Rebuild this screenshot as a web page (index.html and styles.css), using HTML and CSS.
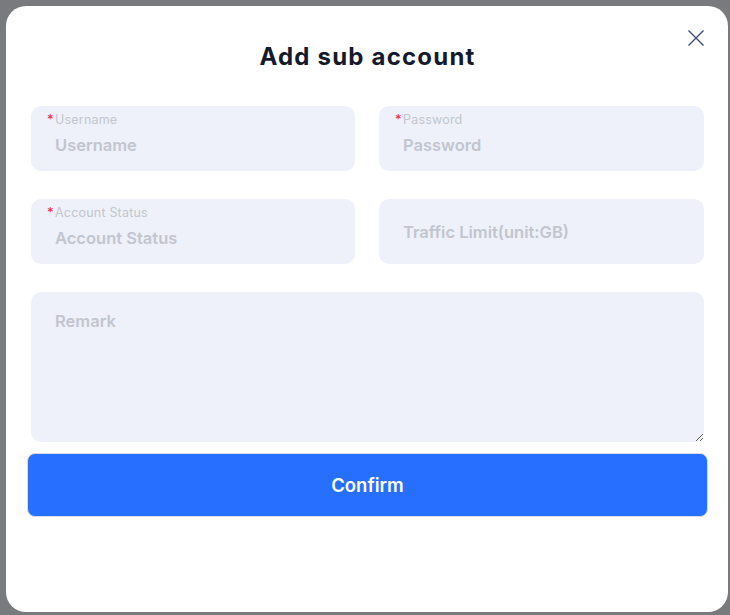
FILE: index.html
```html
<!DOCTYPE html>
<html lang="en">
<head>
<meta charset="utf-8">
<title>Add sub account</title>
<link rel="stylesheet" href="styles.css">
</head>
<body>
<div class="backdrop">
  <div class="modal">
    <button class="close" aria-label="Close">
      <svg width="18" height="18" viewBox="0 0 18 18"><path d="M1.5 1.5 L16.5 16.5 M16.5 1.5 L1.5 16.5" stroke="#3d4a7a" stroke-width="1.4" fill="none"/></svg>
    </button>
    <h1 class="title">Add sub account</h1>
    <form class="form">
      <div class="grid">
        <label class="field">
          <span class="label"><span class="req">*</span>Username</span>
          <input class="input" type="text" placeholder="Username">
        </label>
        <label class="field">
          <span class="label"><span class="req">*</span>Password</span>
          <input class="input" type="password" placeholder="Password">
        </label>
        <label class="field">
          <span class="label"><span class="req">*</span>Account Status</span>
          <input class="input" type="text" placeholder="Account Status">
        </label>
        <label class="field field-plain">
          <input class="input" type="text" placeholder="Traffic Limit(unit:GB)">
        </label>
      </div>
      <textarea class="remark" placeholder="Remark"></textarea>
      <button type="button" class="confirm">Confirm</button>
    </form>
  </div>
</div>
</body>
</html>
```
FILE: styles.css
```css
html, body {
  margin: 0;
  padding: 0;
}
body {
  width: 730px;
  height: 615px;
  background: #797a7e;
  font-family: Inter, "Noto Sans", sans-serif;
  overflow: hidden;
}
.backdrop {
  padding: 6px 2px 3px 6px;
  height: 606px;
}
.modal {
  position: relative;
  width: 722px;
  height: 606px;
  box-sizing: border-box;
  background: #fff;
  border-radius: 20px;
  padding: 0 24px 0 25px;
}
.close {
  position: absolute;
  top: 23px;
  right: 23px;
  width: 18px;
  height: 18px;
  padding: 0;
  border: 0;
  background: none;
  display: flex;
}
.title {
  margin: 0;
  padding-top: 36px;
  height: 64px;
  box-sizing: border-box;
  text-align: center;
  font-size: 24px;
  line-height: 30px;
  font-weight: 700;
  color: #141a2e;
  letter-spacing: 1.2px;
}
.form {
  display: flex;
  flex-direction: column;
  padding-top: 36px;
}
.grid {
  display: grid;
  grid-template-columns: 324px 325px;
  column-gap: 24px;
  row-gap: 28px;
}
.field {
  display: flex;
  flex-direction: column;
  height: 65px;
  box-sizing: border-box;
  background: #eef1f9;
  border-radius: 10px;
  padding: 5px 0 0 16px;
}
.label {
  font-size: 12.5px;
  line-height: 16px;
  letter-spacing: 0.2px;
  color: #c3c6ce;
  display: flex;
  align-items: baseline;
}
.req {
  color: #f5222d;
  font-size: 13px;
  width: 8px;
}
.input {
  margin: 5px 0 0 8px;
  border: 0;
  background: transparent;
  outline: none;
  font-family: inherit;
  font-size: 16.5px;
  line-height: 24px;
  font-weight: 600;
  color: #333;
  padding: 0;
}
.input::placeholder {
  color: #c2c5cf;
}
.field-plain {
  justify-content: center;
  padding-top: 0;
}
.field-plain .input {
  margin-top: 0;
}
.remark {
  margin-top: 28px;
  width: 673px;
  height: 150px;
  box-sizing: border-box;
  border: 0;
  outline: none;
  border-radius: 10px;
  background: #eef1f9;
  padding: 17px 24px;
  font-family: inherit;
  font-size: 16.5px;
  line-height: 24px;
  font-weight: 600;
  resize: vertical;
}
.remark::placeholder {
  color: #c2c5cf;
}
.confirm {
  margin: 11px 0 0 -4px;
  width: 681px;
  height: 64px;
  border: 1px solid #d8dde8;
  border-radius: 8px;
  background: #276ffe;
  color: #fff;
  font-family: inherit;
  font-size: 18.5px;
  font-weight: 600;
}
```
